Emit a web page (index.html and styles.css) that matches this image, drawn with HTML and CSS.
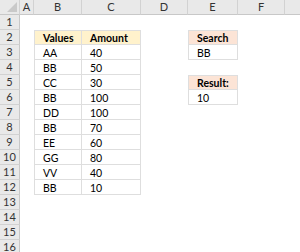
FILE: index.html
```html
<!DOCTYPE html>
<html>
<head>
    <title>Sheet</title>
    <link rel="stylesheet" href="styles.css">
</head>
<body>
    <div class="sheet">
        <!-- column headers -->
        <div class="corner"><span class="tri"></span></div>
        <div class="col-head">A</div>
        <div class="col-head">B</div>
        <div class="col-head">C</div>
        <div class="col-head">D</div>
        <div class="col-head">E</div>
        <div class="col-head">F</div>
        <div class="col-head last"></div>

        <!-- row 1 -->
        <div class="row-head">1</div>
        <div></div><div></div><div></div><div></div><div></div><div></div><div></div>

        <!-- row 2 -->
        <div class="row-head">2</div>
        <div></div>
        <div class="box first top head-yellow">Values</div>
        <div class="box top head-yellow">Amount</div>
        <div></div>
        <div class="box first top head-peach">Search</div>
        <div></div><div></div>

        <!-- row 3 -->
        <div class="row-head">3</div>
        <div></div>
        <div class="box first">AA</div>
        <div class="box">40</div>
        <div></div>
        <div class="box first">BB</div>
        <div></div><div></div>

        <!-- row 4 -->
        <div class="row-head">4</div>
        <div></div>
        <div class="box first">BB</div>
        <div class="box">50</div>
        <div></div><div></div><div></div><div></div>

        <!-- row 5 -->
        <div class="row-head">5</div>
        <div></div>
        <div class="box first">CC</div>
        <div class="box">30</div>
        <div></div>
        <div class="box first top head-peach">Result:</div>
        <div></div><div></div>

        <!-- row 6 -->
        <div class="row-head">6</div>
        <div></div>
        <div class="box first">BB</div>
        <div class="box">100</div>
        <div></div>
        <div class="box first">10</div>
        <div></div><div></div>

        <!-- row 7 -->
        <div class="row-head">7</div>
        <div></div>
        <div class="box first">DD</div>
        <div class="box">100</div>
        <div></div><div></div><div></div><div></div>

        <!-- row 8 -->
        <div class="row-head">8</div>
        <div></div>
        <div class="box first">BB</div>
        <div class="box">70</div>
        <div></div><div></div><div></div><div></div>

        <!-- row 9 -->
        <div class="row-head">9</div>
        <div></div>
        <div class="box first">EE</div>
        <div class="box">60</div>
        <div></div><div></div><div></div><div></div>

        <!-- row 10 -->
        <div class="row-head">10</div>
        <div></div>
        <div class="box first">GG</div>
        <div class="box">80</div>
        <div></div><div></div><div></div><div></div>

        <!-- row 11 -->
        <div class="row-head">11</div>
        <div></div>
        <div class="box first">VV</div>
        <div class="box">40</div>
        <div></div><div></div><div></div><div></div>

        <!-- row 12 -->
        <div class="row-head">12</div>
        <div></div>
        <div class="box first">BB</div>
        <div class="box">10</div>
        <div></div><div></div><div></div><div></div>

        <!-- rows 13-16 -->
        <div class="row-head">13</div>
        <div></div><div></div><div></div><div></div><div></div><div></div><div></div>
        <div class="row-head">14</div>
        <div></div><div></div><div></div><div></div><div></div><div></div><div></div>
        <div class="row-head">15</div>
        <div></div><div></div><div></div><div></div><div></div><div></div><div></div>
        <div class="row-head">16</div>
        <div></div><div></div><div></div><div></div><div></div><div></div><div></div>
    </div>
</body>
</html>
```

FILE: styles.css
```css
body {
    margin: 0;
    padding: 0;
    background-color: #fff;
    font-family: Lato, "Open Sans", sans-serif;
    font-size: 10.5px;
    color: #000;
    overflow: hidden;
}
.sheet {
    display: grid;
    grid-template-columns: 20px 14px 48px 59px 47px 50px 47px 1fr;
    grid-auto-rows: 15px;
    width: 300px;
}
.sheet > div {
    box-sizing: border-box;
    line-height: 14px;
    white-space: nowrap;
    overflow: hidden;
}
.corner {
    position: relative;
    background-color: #e9e9e9;
    border-right: 1px solid #d2d2d2;
    border-bottom: 1px solid #c8c8c8;
}
.tri {
    position: absolute;
    right: 2px;
    bottom: 2px;
    width: 0;
    height: 0;
    border-left: 10px solid transparent;
    border-bottom: 10px solid #c9c9c9;
}
.col-head {
    background-color: #e9e9e9;
    border-right: 1px solid #d2d2d2;
    border-bottom: 1px solid #c8c8c8;
    text-align: center;
    color: #333;
    font-size: 11px;
}
.col-head.last {
    border-right: none;
}
.row-head {
    background-color: #e9e9e9;
    border-right: 1px solid #c8c8c8;
    border-bottom: 1px solid #d2d2d2;
    text-align: center;
    color: #333;
    font-size: 11px;
}
.box {
    border-right: 1px solid #dedede;
    border-bottom: 1px solid #dedede;
    padding-left: 8px;
    padding-top: 1px;
}
.box.first {
    border-left: 1px solid #dedede;
    padding-left: 8px;
}
.box.top {
    border-top: 1px solid #dedede;
    padding-top: 0;
}
.head-yellow {
    background-color: #fff2cc;
    font-weight: bold;
}
.head-peach {
    background-color: #fce4d6;
    font-weight: bold;
}
```
